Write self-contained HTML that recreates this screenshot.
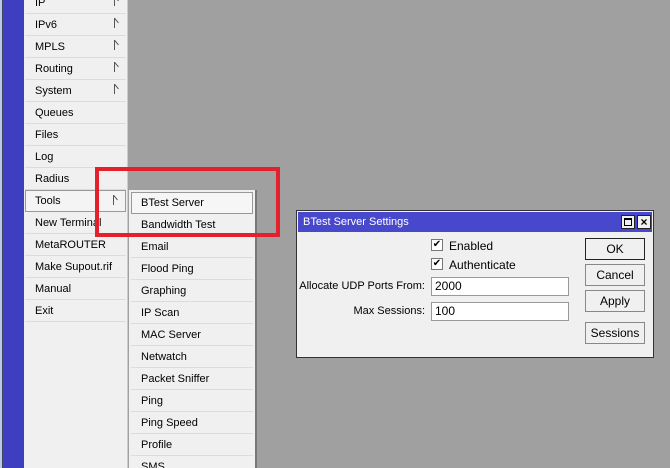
<!DOCTYPE html>
<html><head><style>
*{margin:0;padding:0;box-sizing:border-box}
html,body{width:670px;height:468px;overflow:hidden}
body{background:#a0a0a0;font-family:"Liberation Sans",sans-serif;font-size:11px;color:#000;position:relative}
.a{position:absolute}
.row{position:absolute;height:22px;line-height:23px;border-bottom:1px solid #dcdcdc;white-space:nowrap}
.arr{position:absolute;right:6px;top:4px;width:6px;height:10px;border-left:1px solid #555;}
.arr:after{content:"";position:absolute;left:0;top:0;width:6px;height:1px;background:#555;transform:rotate(50deg);transform-origin:0 0}
.btn{position:absolute;left:585px;width:60px;height:22px;border:1px solid #888;background:#f0f0f0;text-align:center;line-height:20px;font-size:12px}
.inp{position:absolute;left:431px;width:138px;height:19px;border:1px solid #999;background:#fff;line-height:17px;padding-left:3px;font-size:12px}
.cb{position:absolute;left:431px;width:12px;height:12px;border:1px solid #777;background:#fff;font-size:10px;line-height:10px;text-align:center}
</style></head><body>
<div class="a" style="left:0;top:0;width:3px;height:468px;background:#b8c8e8;border-right:1px solid #446"></div>
<div class="a" style="left:3px;top:0;width:21px;height:468px;background:#3e3ec0"></div>
<div class="a" style="left:24px;top:0;width:104px;height:468px;background:#f0f0f0;border-right:1px solid #ccc"></div>
<div class="row" style="left:25px;top:-8px;width:101px;padding-left:10px">IP<span class="arr"></span></div>
<div class="row" style="left:25px;top:14px;width:101px;padding-left:10px">IPv6<span class="arr"></span></div>
<div class="row" style="left:25px;top:36px;width:101px;padding-left:10px">MPLS<span class="arr"></span></div>
<div class="row" style="left:25px;top:58px;width:101px;padding-left:10px">Routing<span class="arr"></span></div>
<div class="row" style="left:25px;top:80px;width:101px;padding-left:10px">System<span class="arr"></span></div>
<div class="row" style="left:25px;top:102px;width:101px;padding-left:10px">Queues</div>
<div class="row" style="left:25px;top:124px;width:101px;padding-left:10px">Files</div>
<div class="row" style="left:25px;top:146px;width:101px;padding-left:10px">Log</div>
<div class="row" style="left:25px;top:168px;width:101px;padding-left:10px">Radius</div>
<div class="row" style="left:25px;top:190px;width:101px;padding-left:9px;border:1px solid #999;background:#f4f4f4;line-height:21px">Tools<span class="arr"></span></div>
<div class="row" style="left:25px;top:212px;width:101px;padding-left:10px;overflow:hidden">New Terminal</div>
<div class="row" style="left:25px;top:234px;width:101px;padding-left:10px">MetaROUTER</div>
<div class="row" style="left:25px;top:256px;width:101px;padding-left:10px">Make Supout.rif</div>
<div class="row" style="left:25px;top:278px;width:101px;padding-left:10px">Manual</div>
<div class="row" style="left:25px;top:300px;width:101px;padding-left:10px">Exit</div>

<div class="a" style="left:129px;top:190px;width:128px;height:278px;background:#f0f0f0;border-right:2px solid #777;overflow:hidden">
<div class="row" style="left:2px;top:2px;width:122px;padding-left:9px;border:1px solid #999;background:#f6f6f6;line-height:21px">BTest Server</div>
<div class="row" style="left:2px;top:24px;width:122px;padding-left:10px">Bandwidth Test</div>
<div class="row" style="left:2px;top:46px;width:122px;padding-left:10px">Email</div>
<div class="row" style="left:2px;top:68px;width:122px;padding-left:10px">Flood Ping</div>
<div class="row" style="left:2px;top:90px;width:122px;padding-left:10px">Graphing</div>
<div class="row" style="left:2px;top:112px;width:122px;padding-left:10px">IP Scan</div>
<div class="row" style="left:2px;top:134px;width:122px;padding-left:10px">MAC Server</div>
<div class="row" style="left:2px;top:156px;width:122px;padding-left:10px">Netwatch</div>
<div class="row" style="left:2px;top:178px;width:122px;padding-left:10px">Packet Sniffer</div>
<div class="row" style="left:2px;top:200px;width:122px;padding-left:10px">Ping</div>
<div class="row" style="left:2px;top:222px;width:122px;padding-left:10px">Ping Speed</div>
<div class="row" style="left:2px;top:244px;width:122px;padding-left:10px">Profile</div>
<div class="row" style="left:2px;top:266px;width:122px;padding-left:10px">SMS</div>
</div>

<div class="a" style="left:95px;top:167px;width:185px;height:70px;border:4px solid #e3202b"></div>

<div class="a" style="left:296px;top:210px;width:358px;height:148px;background:#f0f0f0;border:1px solid #333"></div>
<div class="a" style="left:298px;top:212px;width:354px;height:20px;background:#4848cc;color:#fff;line-height:20px;padding-left:5px">BTest Server Settings</div>
<div class="a" style="left:621px;top:215px;width:14px;height:14px;background:#f0f0f0;border:1px solid #222"><div style="margin:2px;width:8px;height:8px;border:1px solid #000;border-top-width:2px"></div></div>
<div class="a" style="left:637px;top:215px;width:14px;height:14px;background:#f0f0f0;border:1px solid #222;font-size:12px;font-weight:bold;line-height:12px;text-align:center">×</div>
<div class="cb" style="top:239px">✔</div><div class="a" style="left:449px;top:239px;font-size:12px">Enabled</div>
<div class="cb" style="top:258px">✔</div><div class="a" style="left:449px;top:258px;font-size:12px">Authenticate</div>
<div class="a" style="left:290px;top:280px;width:135px;text-align:right;white-space:nowrap">Allocate UDP Ports From:</div>
<div class="inp" style="top:277px">2000</div>
<div class="a" style="left:290px;top:305px;width:135px;text-align:right;white-space:nowrap">Max Sessions:</div>
<div class="inp" style="top:302px">100</div>
<div class="btn" style="top:238px;border:1px solid #222">OK</div>
<div class="btn" style="top:264px">Cancel</div>
<div class="btn" style="top:290px">Apply</div>
<div class="btn" style="top:322px">Sessions</div>
</body></html>
